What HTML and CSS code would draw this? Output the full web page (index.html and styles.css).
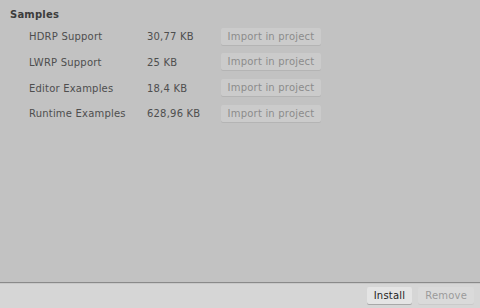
FILE: index.html
```html
<!DOCTYPE html>
<html lang="en">
<head>
  <meta charset="UTF-8" />
  <title>Package Samples</title>
  <link rel="stylesheet" href="styles.css">
</head>
<body>
  <div class="window">

    <!-- Samples list -->
    <section class="samples">
      <h2 class="samples-title">Samples</h2>
      <div class="sample-row">
        <span class="sample-name">HDRP Support</span>
        <span class="sample-size">30,77 KB</span>
        <button class="import-btn" disabled>Import in project</button>
      </div>
      <div class="sample-row">
        <span class="sample-name">LWRP Support</span>
        <span class="sample-size">25 KB</span>
        <button class="import-btn" disabled>Import in project</button>
      </div>
      <div class="sample-row">
        <span class="sample-name">Editor Examples</span>
        <span class="sample-size">18,4 KB</span>
        <button class="import-btn" disabled>Import in project</button>
      </div>
      <div class="sample-row">
        <span class="sample-name">Runtime Examples</span>
        <span class="sample-size">628,96 KB</span>
        <button class="import-btn" disabled>Import in project</button>
      </div>
    </section>

    <!-- Bottom toolbar -->
    <footer class="toolbar">
      <button class="tool-btn">Install</button>
      <button class="tool-btn disabled" disabled>Remove</button>
    </footer>

  </div>
</body>
</html>
```

FILE: styles.css
```css
html, body {
  margin: 0;
  padding: 0;
}

body {
  font-family: "DejaVu Sans", "Liberation Sans", sans-serif;
  font-size: 10px;
  letter-spacing: 0.2px;
  color: #4e4e4e;
  background: #c2c2c2;
}

.window {
  width: 480px;
  height: 308px;
  display: flex;
  flex-direction: column;
}

/* Samples */
.samples {
  flex: 1;
  padding: 8px 0 0 10px;
}

.samples-title {
  margin: 0 0 2px;
  font-size: 10px;
  font-weight: bold;
  color: #3c3c3c;
  line-height: 14px;
}

.sample-row {
  display: flex;
  align-items: center;
  height: 25.67px;
  padding-left: 19px;
}

.sample-name {
  width: 118px;
}

.sample-size {
  width: 74px;
}

.import-btn {
  font-family: inherit;
  font-size: 10px;
  letter-spacing: 0.2px;
  color: #8c8c8c;
  background: #cbcbcb;
  border: none;
  border-radius: 2px;
  box-shadow: 0 1px 0 #b4b4b4;
  height: 17px;
  width: 100px;
  padding: 0;
  margin-top: -1px;
}

/* Bottom toolbar */
.toolbar {
  height: 25px;
  background: #d6d6d6;
  border-top: 1px solid #8a8a8a;
  box-shadow: inset 0 1px 0 #c8c8c8;
  display: flex;
  justify-content: flex-end;
  align-items: center;
  gap: 6px;
  padding: 0 6px 0 0;
}

.tool-btn {
  font-family: inherit;
  font-size: 10px;
  letter-spacing: 0.2px;
  color: #1e1e1e;
  background: #e4e4e4;
  border: none;
  border-radius: 2px;
  box-shadow: 0 1px 0 #a8a8a8;
  height: 17px;
  padding: 0 7px;
}

.tool-btn.disabled {
  color: #9a9a9a;
  background: #dadada;
  box-shadow: 0 1px 0 #cacaca;
}
```
